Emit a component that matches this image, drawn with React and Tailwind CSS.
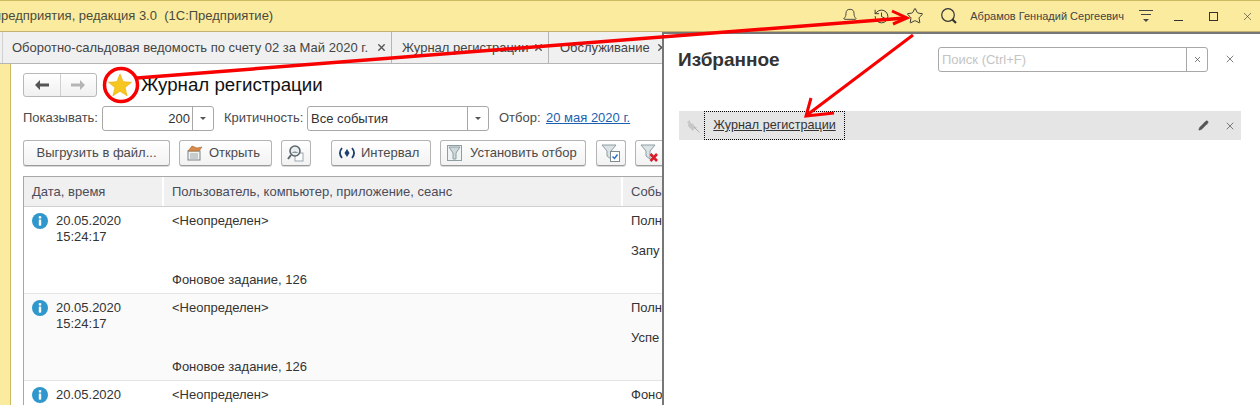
import React from 'react';
import { Bell, History, Star, X, Pencil } from 'lucide-react';

const rows = [
  { alt: false, ev: ['Полн', 'Запу'], full: true },
  { alt: true, ev: ['Полн', 'Успе'], full: true },
  { alt: false, ev: ['Фоно'], full: false }, // cut by the window, only first lines show
];

function Btn({ children, className = '' }) {
  return (
    <div className={`h-[26px] shrink-0 flex items-center rounded-[3px] border border-[#b4b4b4] border-b-[#9a9a9a] bg-gradient-to-b from-white to-[#f2f2f2] text-[13px] text-[#4a4a4a] shadow-[0_1px_0_#d8d8d8] ${className}`}>
      {children}
    </div>
  );
}

function InfoIcon() {
  return (
    <svg width="16" height="16" viewBox="0 0 16 16" className="shrink-0">
      <circle cx="8" cy="8" r="8" fill="#2f97cb" />
      <rect x="6.8" y="6.6" width="2.4" height="6" fill="#fff" />
      <rect x="6.8" y="3.2" width="2.4" height="2.3" fill="#fff" />
    </svg>
  );
}

function Funnel({ mark }) {
  return (
    <svg width="20" height="20" viewBox="0 0 20 20">
      <path d="M1 2h14l-5 6v8l-4-3V8z" fill="#dbe3e6" stroke="#8f9ea3" strokeWidth="1" />
      {mark === 'check' && (
        <g>
          <rect x="9.5" y="8.5" width="9" height="10" fill="#fff" stroke="#7d8a8f" />
          <path d="M11.5 13.5l2 2 3-4" fill="none" stroke="#2a6fc0" strokeWidth="1.4" />
        </g>
      )}
      {mark === 'cross' && <path d="M10.5 11l6.5 7M17 11l-6.500 7" stroke="#d81e2c" strokeWidth="2.6" />}
    </svg>
  );
}

function Table() {
  return (
    <div className="mt-[10px] ml-[12px] border-l border-t border-[#a8a8a8]">
      <div className="flex h-[30px] bg-[#f0f0f0] border-b border-[#d0d0d0] text-[13px] text-[#4b4b5a]">
        <div className="w-[140px] shrink-0 border-r-2 border-white flex items-center pl-[8px]">Дата, время</div>
        <div className="w-[459px] shrink-0 border-r-2 border-white flex items-center pl-[8px]">Пользователь, компьютер, приложение, сеанс</div>
        <div className="flex-1 flex items-center pl-[8px]">События</div>
      </div>
      {rows.map((r, i) => (
        <div key={i} className={`flex h-[87px] border-b border-[#e4e4e4] text-[13px] leading-[16px] text-[#333] ${r.alt ? 'bg-[#fafafa]' : 'bg-white'}`}>
          <div className="w-[140px] shrink-0 pt-[6px] pl-[8px] flex gap-[8px]">
            <InfoIcon />
            <div>
              <div>20.05.2020</div>
              {r.full && <div>15:24:17</div>}
            </div>
          </div>
          <div className="w-[459px] shrink-0 pl-[8px] pt-[6px] flex flex-col justify-between pb-[5px]">
            <div>&lt;Неопределен&gt;</div>
            {r.full && <div>Фоновое задание, 126</div>}
          </div>
          <div className="flex-1 pl-[8px] pt-[6px] flex flex-col gap-[14px]">
            {r.ev.map(e => <div key={e}>{e}</div>)}
          </div>
        </div>
      ))}
    </div>
  );
}

function Journal() {
  return (
    <div className="flex-1 min-w-0 pt-[8px] overflow-hidden">
      <div className="flex items-center ml-[12px] h-[26px]">
        <div className="w-[74px] h-[24px] flex rounded-[3px] border border-[#b8b8b8] bg-gradient-to-b from-white to-[#f0f0f0]">
          <div className="flex-1 flex items-center justify-center border-r border-[#d0d0d0]">
            <svg width="16" height="12" viewBox="0 0 16 12"><path d="M6 1L1 6l5 5V7.500h9v-3H6z" fill="#555" /></svg>
          </div>
          <div className="flex-1 flex items-center justify-center">
            <svg width="16" height="12" viewBox="0 0 16 12"><path d="M10 1l5 5-5 5V7.500H1v-3h9z" fill="#b5b5b5" /></svg>
          </div>
        </div>
        <svg width="24" height="24" viewBox="0 0 24 24" className="ml-[11px] shrink-0">
          <path d="M12 1l3.100 7.700 8.400.6-6.500 5.300 2.100 8.200L12 18.300l-7.100 4.500L7 14.600.5 9.300l8.400-.6z" fill="#f7c61f" stroke="#eab012" strokeWidth=".7" />
        </svg>
        <div className="ml-[9px] text-[18.7px] text-[#111] leading-none">Журнал регистрации</div>
      </div>

      <div className="flex items-center ml-[12px] mt-[7px] h-[26px] text-[13px] text-[#4a4a4a]">
        <div className="w-[79px] shrink-0">Показывать:</div>
        <div className="w-[112px] h-[25px] flex border border-[#a8a8a8] rounded-[3px] text-[#333]">
          <div className="flex-1 text-right pr-[2px] leading-[23px]">200</div>
          <div className="w-[21px] border-l border-[#a8a8a8] flex items-center justify-center">
            <div className="border-x-[3px] border-t-[3px] border-x-transparent border-t-[#555]" />
          </div>
        </div>
        <div className="ml-[10px] w-[83px] shrink-0">Критичность:</div>
        <div className="w-[182px] h-[25px] flex border border-[#a8a8a8] rounded-[3px] text-[#333]">
          <div className="flex-1 pl-[3px] leading-[23px]">Все события</div>
          <div className="w-[21px] border-l border-[#a8a8a8] flex items-center justify-center">
            <div className="border-x-[3px] border-t-[3px] border-x-transparent border-t-[#555]" />
          </div>
        </div>
        <div className="ml-[10px] w-[47px] shrink-0">Отбор:</div>
        <div className="text-[#1c5fb0] underline">20 мая 2020 г.</div>
      </div>

      <div className="flex items-center ml-[12px] mt-[9px]">
        <Btn className="w-[147px] justify-center">Выгрузить в файл...</Btn>
        <Btn className="ml-[9px] w-[93px] pl-[7px] gap-[6px]">
          <svg width="16" height="16" viewBox="0 0 16 16">
            <rect x="1" y="6" width="12" height="9" fill="#f3f3f0" stroke="#77828a" />
            <path d="M3 9h8M3 11h8M3 13h8" stroke="#9aa5ab" />
            <path d="M1 6l4-5 5 2 5-1-3 4z" fill="#d98a4a" stroke="#a8672f" strokeWidth=".6" />
          </svg>
          Открыть
        </Btn>
        <Btn className="ml-[9px] w-[30px] justify-center">
          <svg width="18" height="18" viewBox="0 0 18 18">
            <rect x="8" y="9" width="8" height="8" fill="#fff" stroke="#9aa5ab" />
            <circle cx="8" cy="7" r="5" fill="#e9eef0" stroke="#5d676c" strokeWidth="1.6" />
            <path d="M5 9c1-2 5-2 6 0" fill="#8a9499" />
            <path d="M4 11l-3 4" stroke="#5d676c" strokeWidth="2" />
          </svg>
        </Btn>
        <Btn className="ml-[20px] w-[100px] pl-[6px] gap-[5px]">
          <svg width="18" height="14" viewBox="0 0 18 14">
            <path d="M4 2C1.500 5 1.500 9 4 12M14 2c2.500 3 2.500 7 0 10" fill="none" stroke="#1b3f6e" strokeWidth="1.8" />
            <path d="M9 3l2.500 4L9 11 6.500 7z" fill="#1b3f6e" />
          </svg>
          Интервал
        </Btn>
        <Btn className="ml-[9px] w-[146px] pl-[6px] gap-[8px]">
          <svg width="15" height="16" viewBox="0 0 15 16">
            <rect x=".5" y=".5" width="14" height="15" fill="#eef3f4" stroke="#8f9ea3" />
            <path d="M2 2h11L9 8v6H6V8z" fill="#cfd9dc" stroke="#8f9ea3" />
          </svg>
          Установить отбор
        </Btn>
        <Btn className="ml-[10px] w-[30px] justify-center"><Funnel mark="check" /></Btn>
        <Btn className="ml-[9px] w-[30px] justify-center"><Funnel mark="cross" /></Btn>
      </div>

      <Table />
    </div>
  );
}

function Favorites() {
  return (
    <div className="absolute left-[662px] right-0 top-0 bottom-0 bg-white border-l-2 border-t-2 border-[#777] pl-[15px] pr-[19px] text-[#333]">
      <div className="flex items-center h-[50px]">
        <div className="ml-[-1px] text-[19px] font-bold text-[#333] leading-none">Избранное</div>
        <div className="ml-auto w-[270px] h-[25px] flex border border-[#a8a8a8] rounded-[3px]">
          <div className="flex-1 pl-[3px] text-[13px] leading-[23px] text-[#c4c4c4]">Поиск (Ctrl+F)</div>
          <div className="w-[21px] border-l border-[#a8a8a8] flex items-center justify-center">
            <X size={9} strokeWidth={2} className="text-[#555]" />
          </div>
        </div>
        <X size={12} strokeWidth={1.5} className="ml-[16px] mr-[5px] text-[#555]" />
      </div>
      <div className="mt-[27px] h-[29px] bg-[#e5e5e5] flex items-center">
        <svg width="14" height="14" viewBox="0 0 14 14" className="ml-[7px] shrink-0">
          <path d="M3.500 1L1 3.500l1.500 1L2 7l5 5 1-2.500 1.500.5L11 8.500 8 7l-.5-2L5 4.500z" fill="#c6c6c6" />
          <path d="M8 8l5.500 5.500" stroke="#b0b0b0" strokeWidth="1" />
        </svg>
        <div className="ml-[4px] h-[29px] w-[141px] border border-dotted border-black flex items-center justify-center text-[12.6px] text-[#333] underline">
          Журнал регистрации
        </div>
        <Pencil size={11} fill="#555" strokeWidth={1.5} className="ml-auto mr-[15px] text-[#555]" />
        <X size={12} strokeWidth={1.5} className="mr-[5px] text-[#555]" />
      </div>
    </div>
  );
}

function Arrows() {
  return (
    <svg className="absolute inset-0 pointer-events-none" width="1260" height="405" viewBox="0 0 1260 405" fill="none">
      <circle cx="121" cy="85" r="16.5" stroke="#f80000" strokeWidth="3.5" />
      <path d="M137 78L905 18" stroke="#f80000" strokeWidth="3.5" />
      <path d="M892 11L907 18L893 24" stroke="#f80000" strokeWidth="3" />
      <path d="M913 35L807 115" stroke="#f80000" strokeWidth="3" />
      <path d="M811 98L806 116L834 113" stroke="#f80000" strokeWidth="3" />
    </svg>
  );
}

export default function App() {
  return (
    <div className="relative w-[1260px] h-[405px] overflow-hidden flex flex-col bg-white font-['Liberation_Sans',sans-serif]">
      <div className="h-[32px] shrink-0 flex items-center bg-[#fbeb9f] border-t border-[#cdbb62] border-b border-b-[#c2b272] text-[#4a4a3a]">
        <div className="text-[13px] ml-[-6px] whitespace-nowrap">предприятия, редакция 3.0&nbsp; (1С:Предприятие)</div>
        <div className="ml-auto flex items-center">
          <Bell size={16} strokeWidth={1.3} className="text-[#333]" />
          <History size={17} strokeWidth={1.3} className="ml-[15px] text-[#333]" />
          <Star size={18} strokeWidth={1.3} className="ml-[16px] text-[#333]" />
          <svg width="18" height="18" viewBox="0 0 18 18" fill="none" className="ml-[16px]">
            <circle cx="8" cy="8" r="6.300" stroke="#333" strokeWidth="1.2" />
            <path d="M12.500 12.500L16 16" stroke="#333" strokeWidth="2.200" />
          </svg>
          <div className="ml-[12px] text-[11px] text-[#444]">Абрамов Геннадий Сергеевич</div>
          <svg width="16" height="14" viewBox="0 0 16 14" className="ml-[14px]">
            <path d="M1 1.500h14M3 5.500h10" stroke="#444" />
            <path d="M5 10h6l-3 3z" fill="#444" />
          </svg>
          <div className="ml-[20px] w-[9px] h-[10px] border-b border-[#333]" />
          <div className="ml-[26px] w-[9px] h-[9px] border border-[#333]" />
          <X size={13} strokeWidth={1.1} className="ml-[23px] mr-[6px] text-[#333]" />
        </div>
      </div>

      <div className="relative flex-1 min-h-0 flex flex-col">
        <div className="h-[32px] shrink-0 flex bg-[#f0f0f0] border-b border-[#b5b5b5] pl-[2px] text-[13px] text-[#444]">
          <div className="w-[390px] flex items-center pl-[9px] border-r border-[#b5b5b5] border-l border-l-[#d0d0d0]">
            Оборотно-сальдовая ведомость по счету 02 за Май 2020 г.
            <X size={11} strokeWidth={3} className="ml-[8px] text-[#555]" />
          </div>
          <div className="w-[157px] flex items-center pl-[10px] border-r border-[#b5b5b5]">
            Журнал регистрации
            <X size={11} strokeWidth={3} className="ml-[5px] text-[#555]" />
          </div>
          <div className="flex items-center pl-[11px]">
            Обслуживание
            <X size={11} strokeWidth={3} className="ml-[6px] text-[#555]" />
          </div>
        </div>
        <div className="flex-1 min-h-0 flex">
          <div className="w-[11px] shrink-0 bg-[#fbeb9f] border-r border-[#cdbb62]" />
          <Journal />
        </div>
        <Favorites />
      </div>
      <Arrows />
    </div>
  );
}
